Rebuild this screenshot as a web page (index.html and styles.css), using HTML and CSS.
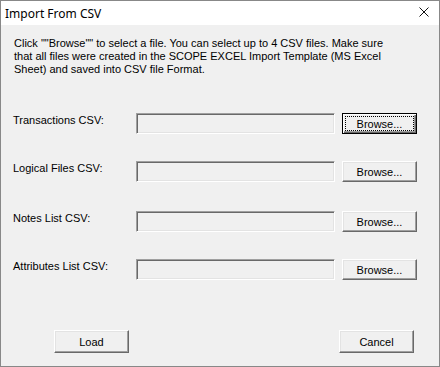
FILE: index.html
```html
<!DOCTYPE html>
<html lang="en">
<head>
    <meta charset="UTF-8">
    <title>Import From CSV</title>
    <link rel="stylesheet" href="styles.css">
</head>
<body>
    <div class="window">
        <div class="titlebar">
            <span class="title">Import From CSV</span>
            <svg class="close" width="10" height="10" viewBox="0 0 10 10">
                <path d="M0.5 0.5 L9.5 9.5 M9.5 0.5 L0.5 9.5" stroke="#111" stroke-width="1" fill="none"/>
            </svg>
        </div>

        <div class="content">
            <p class="intro">Click ""Browse"" to select a file. You can select up to 4 CSV files. Make sure that all files were created in the SCOPE EXCEL Import Template (MS Excel Sheet) and saved into CSV file Format.</p>

            <div class="rows">
                <div class="row">
                    <label class="label">Transactions CSV:</label>
                    <div class="field"></div>
                    <button class="button focused"><span>Browse...</span></button>
                </div>
                <div class="row">
                    <label class="label">Logical Files CSV:</label>
                    <div class="field"></div>
                    <button class="button"><span>Browse...</span></button>
                </div>
                <div class="row">
                    <label class="label">Notes List CSV:</label>
                    <div class="field"></div>
                    <button class="button"><span>Browse...</span></button>
                </div>
                <div class="row">
                    <label class="label">Attributes List CSV:</label>
                    <div class="field"></div>
                    <button class="button"><span>Browse...</span></button>
                </div>
            </div>

            <div class="footer">
                <button class="button big"><span>Load</span></button>
                <button class="button big"><span>Cancel</span></button>
            </div>
        </div>
    </div>
</body>
</html>
```

FILE: styles.css
```css
* {
    margin: 0;
    padding: 0;
    box-sizing: border-box;
}

body {
    font-family: "Liberation Sans", Arial, sans-serif;
    font-size: 11px;
    color: #000;
    background: #f0f0f0;
}

.window {
    width: 440px;
    height: 367px;
    border: 1px solid #888;
    background: #f0f0f0;
}

.titlebar {
    height: 24px;
    background: #fff;
    display: flex;
    align-items: center;
    justify-content: space-between;
    padding: 0 10px 0 4px;
}

.title {
    font-family: "Noto Sans", "Open Sans", sans-serif;
    font-size: 12px;
    color: #000;
}

.close {
    display: block;
    margin-top: -2px;
}

.content {
    padding: 12px 0 0 12px;
}

.intro {
    width: 380px;
    padding-left: 1px;
    line-height: 13px;
}

.rows {
    margin-top: 37px;
}

.row {
    display: flex;
    height: 21px;
    margin-bottom: 27px;
}

.row:nth-child(2) {
    margin-bottom: 29px;
}

.row:last-child {
    margin-bottom: 0;
}

.label {
    width: 123px;
    line-height: 13px;
    padding-top: 1px;
}

.field {
    width: 199px;
    height: 21px;
    background: #f0f0f0;
    border: 1px solid;
    border-color: #a0a0a0 #fff #fff #a0a0a0;
    box-shadow: inset 1px 1px #696969, inset -1px -1px #e3e3e3;
}

.button {
    width: 75px;
    height: 21px;
    margin-left: 7px;
    font-family: "Liberation Sans", Arial, sans-serif;
    font-size: 11px;
    color: #000;
    background: #f0f0f0;
    border: 1px solid;
    border-color: #fff #696969 #696969 #fff;
    box-shadow: inset -1px -1px #a0a0a0, inset 1px 1px #e3e3e3;
    display: flex;
    align-items: center;
    justify-content: center;
    padding: 2px;
}

.button span {
    display: flex;
    align-items: center;
    justify-content: center;
    width: 100%;
    height: 100%;
    border: 1px solid transparent;
}

.button.focused {
    border-color: #000;
    box-shadow: inset 1px 1px #fff, inset -1px -1px #696969, inset -2px -2px #a0a0a0;
}

.button.focused span {
    border: 1px dotted #000;
}

.footer {
    display: flex;
    justify-content: space-between;
    margin-top: 50px;
    padding: 0 25px 0 41px;
}

.footer .button {
    height: 23px;
    margin-left: 0;
}
```
